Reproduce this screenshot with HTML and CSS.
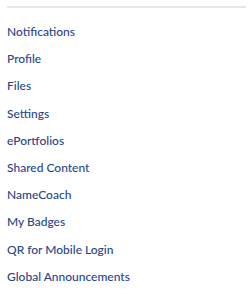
FILE: index.html
```html
<!DOCTYPE html>
<html>
<head>
<meta charset="utf-8">
<link rel="stylesheet" href="styles.css">
</head>
<body>
<div class="tray">
  <hr class="divider">
  <ul class="links">
    <li><a href="#">Notifications</a></li>
    <li><a href="#">Profile</a></li>
    <li><a href="#">Files</a></li>
    <li><a href="#">Settings</a></li>
    <li><a href="#">ePortfolios</a></li>
    <li><a href="#">Shared Content</a></li>
    <li><a href="#">NameCoach</a></li>
    <li><a href="#">My Badges</a></li>
    <li><a href="#">QR for Mobile Login</a></li>
    <li><a href="#">Global Announcements</a></li>
  </ul>
</div>
</body>
</html>
```
FILE: styles.css
```css
html, body {
  margin: 0;
  padding: 0;
  background: #ffffff;
}
.tray {
  padding: 6px 2px 0 7px;
  font-family: Lato, "Noto Sans", sans-serif;
}
.divider {
  margin: 0;
  border: 0;
  height: 2px;
  background: #e8e8e8;
}
.links {
  list-style: none;
  margin: 0;
  padding: 10px 0 0 0;
}
.links li {
  line-height: 27.2px;
  font-size: 12px;
}
.links a {
  color: #27468a;
  text-decoration: none;
  font-weight: 500;
}
```
